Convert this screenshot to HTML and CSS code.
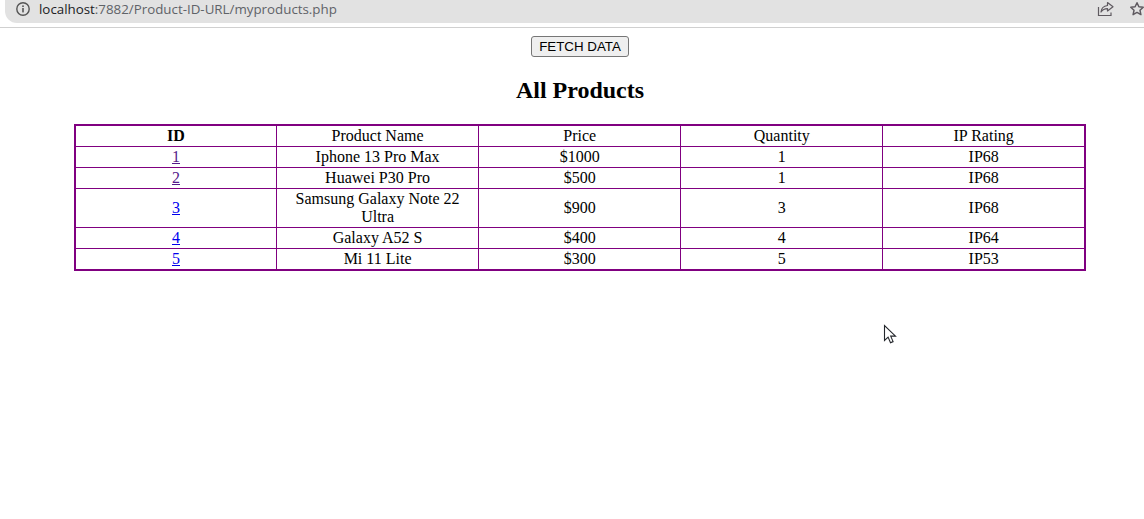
FILE: index.html
```html
<!DOCTYPE html>
<html lang="en">
<head>
    <meta charset="UTF-8">
    <title>All Products</title>
    <link rel="stylesheet" href="styles.css">
</head>
<body>
    <!-- browser toolbar as captured in the screenshot -->
    <div class="toolbar">
        <div class="address-bar">
            <svg class="info-icon" width="16" height="16" viewBox="0 0 16 16">
                <circle cx="8" cy="8" r="6.2" fill="none" stroke="#555" stroke-width="1.4"/>
                <rect x="7.2" y="7" width="1.6" height="4.4" fill="#555"/>
                <rect x="7.2" y="4.4" width="1.6" height="1.6" fill="#555"/>
            </svg>
            <span class="url"><span class="host">localhost</span>:7882/Product-ID-URL/myproducts.php</span>
            <div class="bar-actions">
                <svg width="18" height="16" viewBox="0 0 18 16">
                    <path d="M1.5 6v8.5h12.5v-3" fill="none" stroke="#5f5a60" stroke-width="1.2"/>
                    <path d="M10.5 1.5l5.5 4.3-5.5 4.2V7.6C7.5 7.6 5.5 8.6 4 11c.3-3.500 2.700-6 6.500-6.500z" fill="none" stroke="#5f5a60" stroke-width="1.2" stroke-linejoin="round"/>
                </svg>
                <svg width="16" height="16" viewBox="0 0 16 16">
                    <path d="M8 1.800l1.900 4 4.300.5-3.200 3 .9 4.300L8 11.400l-3.900 2.200.9-4.300-3.200-3 4.300-.5z" fill="none" stroke="#5f5a60" stroke-width="1.500" stroke-linejoin="round"/>
                </svg>
            </div>
        </div>
    </div>

    <main class="content">
        <button class="fetch-btn">FETCH DATA</button>
        <h2>All Products</h2>

        <table class="products">
            <tr>
                <th>ID</th>
                <td>Product Name</td>
                <td>Price</td>
                <td>Quantity</td>
                <td>IP Rating</td>
            </tr>
            <tr>
                <td><a href="#" class="visited">1</a></td>
                <td>Iphone 13 Pro Max</td>
                <td>$1000</td>
                <td>1</td>
                <td>IP68</td>
            </tr>
            <tr>
                <td><a href="#" class="visited">2</a></td>
                <td>Huawei P30 Pro</td>
                <td>$500</td>
                <td>1</td>
                <td>IP68</td>
            </tr>
            <tr>
                <td><a href="#">3</a></td>
                <td>Samsung Galaxy Note 22 Ultra</td>
                <td>$900</td>
                <td>3</td>
                <td>IP68</td>
            </tr>
            <tr>
                <td><a href="#">4</a></td>
                <td>Galaxy A52 S</td>
                <td>$400</td>
                <td>4</td>
                <td>IP64</td>
            </tr>
            <tr>
                <td><a href="#">5</a></td>
                <td>Mi 11 Lite</td>
                <td>$300</td>
                <td>5</td>
                <td>IP53</td>
            </tr>
        </table>
    </main>

    <!-- mouse pointer caught in the capture -->
    <svg class="pointer" width="14" height="21" viewBox="0 0 14 21">
        <path d="M1.500 1.500v15l3.600-3.400 2.400 5.600 2.600-1.100-2.400-5.500h4.800z" fill="#fff" stroke="#23262b" stroke-width="1.100" stroke-linejoin="miter"/>
    </svg>
</body>
</html>
```

FILE: styles.css
```css
* {
    box-sizing: border-box;
}

body {
    margin: 0;
    background: #fff;
    color: #000;
    font-family: 'Liberation Serif', serif;
    font-size: 16px;
    overflow: hidden;
}

.toolbar {
    height: 28px;
    padding-left: 5px;
    border-bottom: 1px solid #d0d0d0;
}

.address-bar {
    display: flex;
    align-items: center;
    height: 23px;
    padding: 0 0 5px 10px;
    background: #e2e2e2;
    border-radius: 0 0 0 12px;
}

.info-icon {
    flex: none;
}

.url {
    margin-left: 8px;
    font-family: 'Open Sans', 'Liberation Sans', sans-serif;
    font-size: 13.33px;
    color: #5f6368;
}

.host {
    color: #202124;
}

.bar-actions {
    display: flex;
    align-items: center;
    gap: 14px;
    margin-left: auto;
    margin-right: -1px;
}

.content {
    text-align: center;
    padding-top: 8px;
    padding-left: 16px;
}

.fetch-btn {
    display: block;
    width: 98px;
    height: 21px;
    margin: 0 auto;
    padding: 0;
    background: #efefef;
    border: 1px solid #767676;
    border-radius: 3px;
    font-family: 'Liberation Sans', sans-serif;
    font-size: 13.333px;
    color: #000;
}

h2 {
    margin: 20px 0;
    font-size: 24px;
    line-height: 27px;
    font-weight: bold;
}

.products {
    width: 1012px;
    margin: 0 auto;
    table-layout: fixed;
    border-collapse: collapse;
    border: 2px solid #800080;
}

.products th,
.products td {
    padding: 1px 16px;
    border: 1px solid #800080;
    text-align: center;
}

.products th {
    width: 201.5px;
}

.products a {
    color: #0000ee;
}

.products a.visited {
    color: #551a8b;
}

.pointer {
    position: absolute;
    left: 883px;
    top: 324px;
}
```
